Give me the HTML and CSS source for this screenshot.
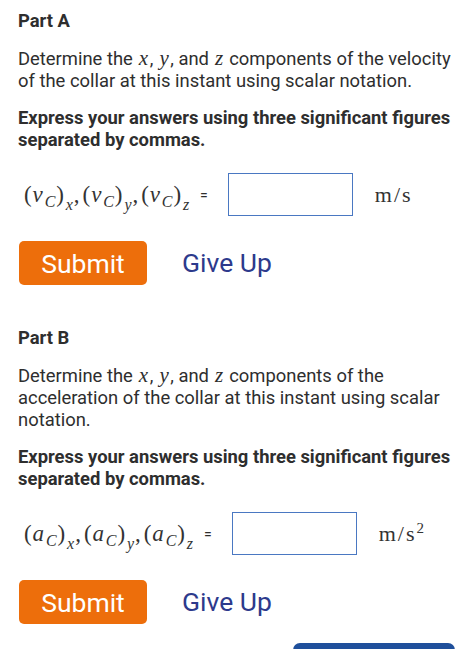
FILE: index.html
```html
<!DOCTYPE html>
<html lang="en">
<head>
    <meta charset="UTF-8">
    <meta name="viewport" content="width=device-width, initial-scale=1.0">
    <title>Part A / Part B</title>
    <link rel="stylesheet" href="styles.css">
</head>
<body>
    <div class="part">
        <h2 class="part-title">Part A</h2>
        <p class="prompt">Determine the <i class="mv">x</i>, <i class="mv">y</i>, and <i class="mv">z</i> components of the velocity of the collar at this instant using scalar notation.</p>
        <p class="instructions">Express your answers using three significant figures separated by commas.</p>

        <div class="answer-row">
            <span class="math"><span class="grp">(<i>v</i><sub><i>C</i></sub>)<sub class="idx"><i>x</i></sub></span><span class="comma">,</span><span class="grp">(<i>v</i><sub><i>C</i></sub>)<sub class="idx"><i>y</i></sub></span><span class="comma">,</span><span class="grp">(<i>v</i><sub><i>C</i></sub>)<sub class="idx"><i>z</i></sub></span></span>
            <span class="equals">=</span>
            <input class="answer-box" type="text">
            <span class="unit">m/s</span>
        </div>

        <div class="actions">
            <button class="btn-submit">Submit</button>
            <a class="give-up">Give Up</a>
        </div>
    </div>

    <div class="part">
        <h2 class="part-title">Part B</h2>
        <p class="prompt">Determine the <i class="mv">x</i>, <i class="mv">y</i>, and <i class="mv">z</i> components of the acceleration of the collar at this instant using scalar notation.</p>
        <p class="instructions">Express your answers using three significant figures separated by commas.</p>

        <div class="answer-row">
            <span class="math"><span class="grp">(<i>a</i><sub><i>C</i></sub>)<sub class="idx"><i>x</i></sub></span><span class="comma">,</span><span class="grp">(<i>a</i><sub><i>C</i></sub>)<sub class="idx"><i>y</i></sub></span><span class="comma">,</span><span class="grp">(<i>a</i><sub><i>C</i></sub>)<sub class="idx"><i>z</i></sub></span></span>
            <span class="equals">=</span>
            <input class="answer-box" type="text">
            <span class="unit">m/s<sup>2</sup></span>
        </div>

        <div class="actions">
            <button class="btn-submit">Submit</button>
            <a class="give-up">Give Up</a>
        </div>
    </div>

    <div class="footer">
        <button class="btn-next"></button>
    </div>
</body>
</html>
```

FILE: styles.css
```css
body {
    margin: 0;
    padding: 10px 12px 0 18px;
    background-color: #fff;
    color: #2e2e2e;
    font-family: Roboto, 'Noto Sans', sans-serif;
    font-size: 18.4px;
    line-height: 22px;
}

.part {
    margin-bottom: 42px;
}

.part-title {
    margin: 0;
    font-size: 18.4px;
    font-weight: 700;
    line-height: 22px;
}

.prompt {
    margin: 16px 0 0;
}

.instructions {
    margin: 15px 0 0;
    font-weight: 700;
}

/* inline math variables */
.mv,
.math i {
    font-family: 'Liberation Serif', 'DejaVu Serif', serif;
    font-style: italic;
}

.mv {
    font-size: 21px;
    line-height: 1;
    padding: 0 1.5px;
}

.answer-row {
    display: flex;
    align-items: center;
    margin-top: 22px;
    padding-left: 6px;
}

.math {
    display: flex;
    align-items: baseline;
    font-family: 'Liberation Serif', 'DejaVu Serif', serif;
    font-size: 23px;
    color: #333;
    white-space: nowrap;
}

.math .grp {
    letter-spacing: 0.9px;
}

.math sub {
    font-size: 16px;
    vertical-align: -5px;
    line-height: 0;
    margin-left: 1px;
}

.math sub.idx {
    font-size: 16px;
    vertical-align: -8px;
}

.math .comma {
    margin-right: 3px;
}

.equals {
    font-size: 14px;
    margin-left: 10px;
}

.answer-box {
    width: 125px;
    height: 43px;
    box-sizing: border-box;
    margin-left: 20px;
    border: 1px solid #4a78c2;
    border-radius: 0;
    padding: 0 6px;
    font-size: 18px;
    outline: none;
}

.unit {
    margin-left: 22px;
    font-family: 'Liberation Serif', 'DejaVu Serif', serif;
    font-size: 22px;
    letter-spacing: 2px;
    color: #333;
}

.unit sup {
    font-size: 15px;
    line-height: 0;
    letter-spacing: 0;
    vertical-align: 8px;
}

.actions {
    display: flex;
    align-items: center;
    margin-top: 25px;
    padding-left: 1px;
}

.btn-submit {
    width: 128px;
    height: 44px;
    border: none;
    border-radius: 5px;
    background-color: #ed6e0b;
    color: #fff;
    font-family: Roboto, sans-serif;
    font-size: 26.5px;
    cursor: pointer;
}

.give-up {
    margin-left: 35px;
    color: #2d3a8c;
    font-size: 26.5px;
    line-height: 30px;
    cursor: pointer;
}

.footer {
    display: flex;
    justify-content: flex-end;
    margin-top: -23px;
    padding-right: 7px;
}

.btn-next {
    width: 162px;
    height: 40px;
    border: none;
    border-radius: 7px;
    background-color: #1f4f9b;
}
```
